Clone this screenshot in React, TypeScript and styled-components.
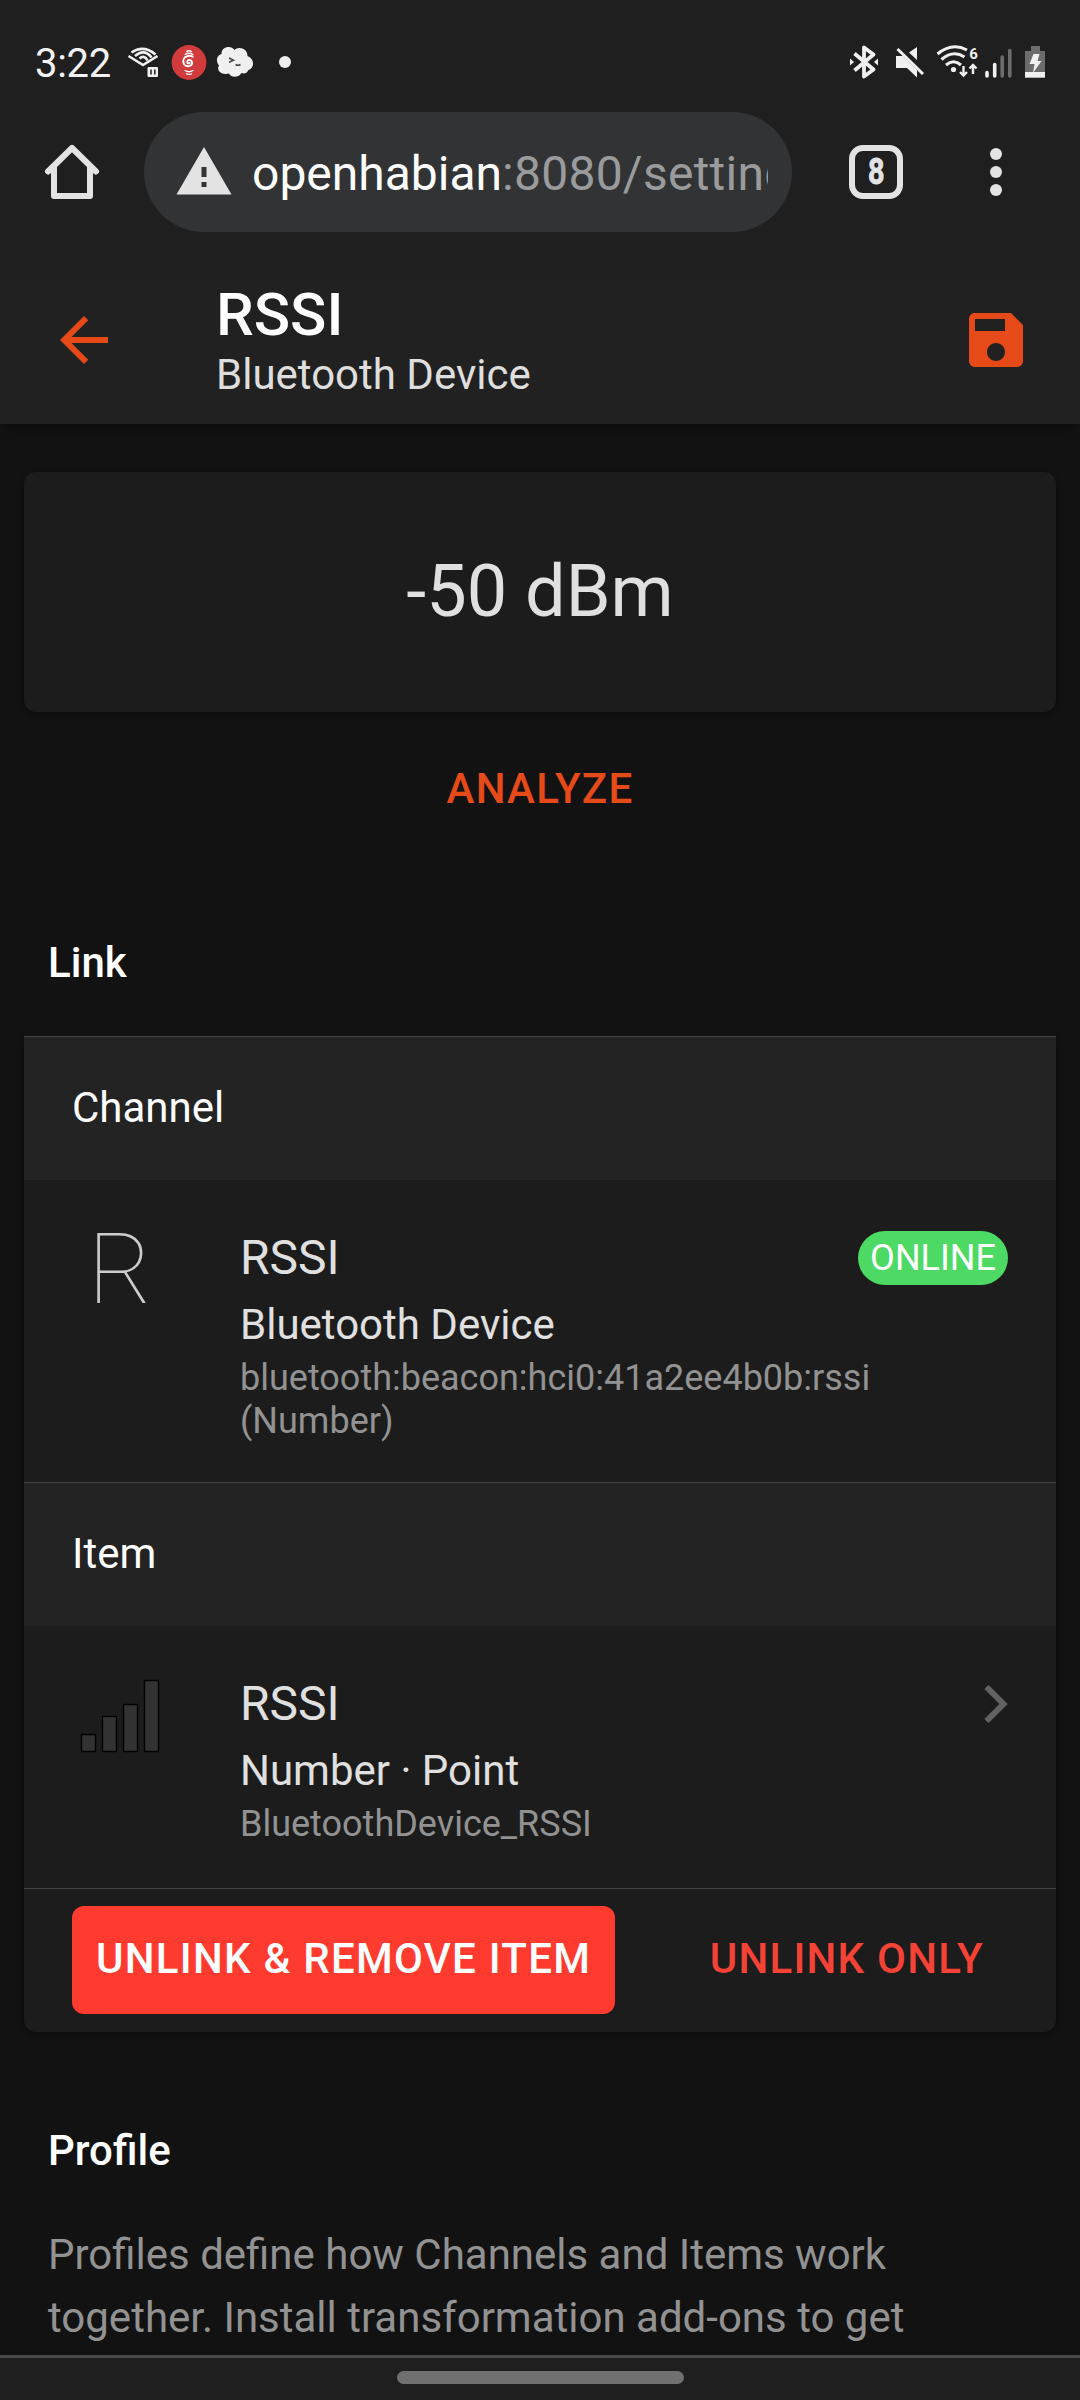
import React from "react";
import styled, { createGlobalStyle } from "styled-components";

const GlobalStyle = createGlobalStyle`
  *, *::before, *::after { box-sizing: border-box; }
  body {
    margin: 0;
    background: #121212;
    font-family: Roboto, "Noto Sans", sans-serif;
    color: #e0e0e0;
  }
  button { font: inherit; border: 0; padding: 0; background: none; color: inherit; }
  svg { display: block; }
`;

const Screen = styled.div`
  width: 1080px;
  height: 2400px;
  display: flex;
  flex-direction: column;
  overflow: hidden;
  background: #121212;
`;

const StatusBar = styled.header`
  flex: none;
  height: 112px;
  padding: 12px 35px 0 35px;
  display: flex;
  justify-content: space-between;
  align-items: center;
  background: #1f1f1f;
`;

const StatusGroup = styled.div`
  display: flex;
  align-items: center;
`;

const Clock = styled.span`
  width: 91px;
  padding-top: 3px;
  font-size: 40px;
  line-height: 48px;
  letter-spacing: -0.3px;
  color: #f2f2f2;
`;

const BrowserBar = styled.div`
  flex: none;
  height: 144px;
  padding: 0 66px 24px 36px;
  display: flex;
  align-items: center;
  background: #1f1f1f;
`;

const AddressPill = styled.div`
  width: 648px;
  height: 120px;
  margin-left: 36px;
  padding: 0 24px 0 30px;
  display: flex;
  align-items: center;
  gap: 18px;
  border-radius: 60px;
  background: #323335;
`;

const Url = styled.span`
  flex: 1;
  padding-top: 3px;
  overflow: hidden;
  white-space: nowrap;
  font-size: 48px;
  line-height: 60px;
  letter-spacing: 0.25px;
  color: #9a9b9c;
`;

const Host = styled.span`
  letter-spacing: 0;
  color: #fff;
`;

const TabCount = styled.button`
  width: 54px;
  height: 54px;
  margin-left: 57px;
  display: flex;
  align-items: center;
  justify-content: center;
  border: 6px solid #e3e3e3;
  border-radius: 14px;
  color: #e3e3e3;
  font-size: 36px;
  font-weight: 700;
  line-height: 42px;
`;

const Condensed = styled.span`
  transform: scaleX(0.8);
  -webkit-text-stroke: 0.8px #e3e3e3;
`;

const MenuDots = styled.button`
  margin-left: auto;
  width: 36px;
  display: flex;
  flex-direction: column;
  align-items: center;
  gap: 6px;
`;

const Dot = styled.i`
  width: 12px;
  height: 12px;
  border-radius: 50%;
  background: #e3e3e3;
`;

const Navbar = styled.nav`
  flex: none;
  height: 168px;
  padding: 0 48px;
  display: flex;
  align-items: center;
  background: linear-gradient(#1f1f1f, #212121 28px);
  box-shadow: 0 10px 10px -4px rgba(0, 0, 0, 0.3);
`;

const NavTitle = styled.div`
  flex: 1;
  margin-left: 96px;
  padding-top: 2px;
`;

const Title = styled.h1`
  margin: 0;
  font-size: 60px;
  font-weight: 500;
  line-height: 66px;
  color: #fff;
`;

const Subtitle = styled.div`
  padding-top: 2px;
  font-size: 42px;
  line-height: 50px;
  color: #dedede;
`;

const Page = styled.main`
  flex: 1;
  min-height: 0;
  overflow: hidden;
  padding: 48px 24px 0;
  display: flex;
  flex-direction: column;
`;

const cardShadow = "0 3px 6px rgba(0, 0, 0, 0.4)";

const ValueCard = styled.section`
  flex: none;
  height: 240px;
  display: flex;
  align-items: center;
  justify-content: center;
  border-radius: 12px;
  background: #1c1c1c;
  box-shadow: ${cardShadow};
  font-size: 72px;
  line-height: 84px;
`;

const AnalyzeButton = styled.button`
  flex: none;
  height: 108px;
  margin-top: 23px;
  font-size: 42px;
  font-weight: 500;
  line-height: 108px;
  letter-spacing: 1.26px;
  color: #e64a19;
`;

const BlockTitle = styled.h2<{ $top: number }>`
  flex: none;
  margin: ${(p) => p.$top}px 24px 0;
  font-size: 42px;
  font-weight: 500;
  line-height: 48px;
  color: #fff;
`;

const LinkCard = styled.section`
  flex: none;
  margin-top: 49px;
  border-radius: 0 0 12px 12px;
  background: #1c1c1c;
  box-shadow: ${cardShadow};
`;

const CardHeader = styled.div`
  height: 144px;
  padding: 0 48px;
  border-top: 1px solid #414141;
  background: #232323;
  font-size: 42px;
  line-height: 142px;
  color: #fff;
`;

const ListItem = styled.div<{ $height: number }>`
  height: ${(p) => p.$height}px;
  padding: 42px 48px 0;
  display: flex;
  align-items: flex-start;
`;

const Media = styled.div`
  flex: none;
  width: 96px;
  display: flex;
  justify-content: center;
`;

const Letter = styled.span`
  font-size: 98px;
  font-weight: 100;
  line-height: 96px;
  color: #cccccc;
`;

const ItemBody = styled.div`
  flex: 1;
  min-width: 0;
  margin-left: 72px;
`;

const ItemTitleRow = styled.div`
  height: 72px;
  display: flex;
  justify-content: space-between;
  align-items: center;
  font-size: 48px;
  line-height: 72px;
`;

const ItemSubtitle = styled.div`
  font-size: 42px;
  line-height: 62px;
`;

const ItemText = styled.div`
  margin-top: 1px;
  font-size: 36px;
  line-height: 43px;
  color: #929292;
`;

const Badge = styled.span`
  width: 150px;
  height: 54px;
  border-radius: 27px;
  background: #4cd964;
  color: #fff;
  font-size: 36px;
  line-height: 54px;
  text-align: center;
`;

const Actions = styled.div`
  height: 144px;
  padding: 17px 48px 0;
  display: flex;
  align-items: flex-start;
  justify-content: space-between;
  border-top: 1px solid #414141;
`;

const ActionButton = styled.button<{ $filled?: boolean }>`
  height: 108px;
  padding: 0 24px 2px;
  border-radius: 12px;
  background: ${(p) => (p.$filled ? "#ff3b30" : "transparent")};
  color: ${(p) => (p.$filled ? "#fff" : "#f44336")};
  font-size: 42px;
  font-weight: 500;
  line-height: 106px;
  letter-spacing: 1.26px;
  white-space: nowrap;
`;

const Paragraph = styled.p`
  flex: none;
  width: 900px;
  margin: 48px 24px 0;
  font-size: 42px;
  line-height: 63px;
  color: #929292;
`;

const GestureBar = styled.footer`
  flex: none;
  height: 45px;
  padding-top: 13px;
  border-top: 3px solid #4a4a4a;
  background: #1f1f1f;
`;

const Handle = styled.div`
  width: 287px;
  height: 13px;
  margin: 0 auto;
  border-radius: 7px;
  background: #707070;
`;

const WifiGeneration = styled.text`
  font: 700 15px Roboto, sans-serif;
  fill: #f0f0f0;
`;

const StatusLeftIcons = () => (
  <svg width="170" height="48" viewBox="126 38 170 48">
    <g fill="none" stroke="#f0f0f0" strokeWidth="2.6">
      <path d="M128.500 56 L143 65 L157.500 56" />
      <path d="M131.500 52.500 Q143.500 44.500 155.500 54.500" />
      <path d="M135 56 Q144.500 48 151.500 57.500" />
      <path d="M139.500 58.500 Q144.500 54.500 147.500 60.500" />
    </g>
    <rect x="147.500" y="67" width="10.500" height="10" rx="1" fill="#f0f0f0" />
    <path d="M151 69.500v5M154.800 69.500v5" stroke="#1f1f1f" strokeWidth="1.500" />
    <circle cx="189" cy="62.500" r="17.400" fill="#d23b3c" />
    <g fill="none" stroke="#fff" strokeLinecap="round">
      <path
        d="M189.500 63q-2.500 1-2.300-1.500q1-2.500 4-1q2 3-.5 5q-4 2-6.500-1q-2-4 .5-7q4-3 8-.8"
        strokeWidth="1.900"
      />
      <path
        d="M185 54.500q4-2.500 8 0M186.500 51.500q2.500-1.500 5 0M185 70.500q4 2.500 8 0M186.500 73.700q2.500 1.500 5 0"
        strokeWidth="1.300"
      />
    </g>
    <path
      d="M221.500 54 C221 47 231 44.500 234.500 50 C239 46 247.500 48.500 247.500 56 C254.500 58.500 255 68 248.500 70 C247 73.500 244 74 241.500 73 C238 78.500 231 77.500 229 73.500 C221 75.500 216 70 219 65.500 C215.500 61 216.500 55.500 221.500 54Z"
      fill="#f0f0f0"
    />
    <path
      d="M229 58l4.500 2.300-4.500 2M235.500 64.500q2.500 1.500 5 0"
      fill="none"
      stroke="#444"
      strokeWidth="1.500"
    />
    <circle cx="285" cy="62" r="6" fill="#f0f0f0" />
  </svg>
);

const StatusRightIcons = () => (
  <svg width="197" height="48" viewBox="848 38 197 48">
    <path
      d="M854.500 53.500 L873.500 69.500 L864 76.500 V47.500 L873.500 54.500 L854.500 70.500"
      fill="none"
      stroke="#f0f0f0"
      strokeWidth="3.800"
      strokeLinejoin="round"
    />
    <path d="M850 58.500v7l4-3.500zM878 58.500v7l-4-3.500z" fill="#f0f0f0" />
    <path d="M896 56h7l14 14v7.500l-10-9.500h-11zM917 47v13l-8-7.500z" fill="#f0f0f0" />
    <path d="M897.500 49 L923 74" stroke="#f0f0f0" strokeWidth="3" />
    <g fill="none" stroke="#f0f0f0" strokeWidth="3">
      <path d="M937.500 54 Q952 42 967 50" />
      <path d="M941.500 59.500 Q953 49.500 964.500 57" />
      <path d="M946 65 Q953.500 58.500 961 65" />
    </g>
    <circle cx="953.500" cy="69.500" r="2.600" fill="#f0f0f0" />
    <WifiGeneration x="969.300" y="59">6</WifiGeneration>
    <path
      d="M963.500 66v9M960 72l3.500 3.500 3.500-3.500M973 74v-9M969.500 68.500l3.500-3.500 3.500 3.500"
      fill="none"
      stroke="#f0f0f0"
      strokeWidth="2.400"
    />
    <g strokeWidth="3.600" strokeLinecap="round">
      <path d="M987 72.500v3.500M994.700 64.500v11.500" stroke="#f0f0f0" />
      <path d="M1002.200 57v19M1009.800 50.500v25.500" stroke="#6c6c6c" />
    </g>
    <path d="M1031 46h9v5h5v27h-20v-27h6z" fill="#6c6c6c" />
    <path d="M1025 72h20v5.500h-20z" fill="#f0f0f0" />
    <path d="M1033.500 54h6l-2 7h4l-8.500 12 1.500-9h-5z" fill="#f0f0f0" />
  </svg>
);

const HomeIcon = () => (
  <svg width="72" height="72" viewBox="0 0 72 72" fill="none" stroke="#e3e3e3" strokeWidth="6">
    <path d="M12 35.500 L36 12 L60 35.500" strokeLinecap="round" strokeLinejoin="round" />
    <path d="M18 31 V60 H54 V31" strokeLinejoin="round" />
  </svg>
);

const MaterialIcon = ({ size, color, d }: { size: number; color: string; d: string }) => (
  <svg width={size} height={size} viewBox="0 0 24 24" fill={color}>
    <path d={d} />
  </svg>
);

const WARNING = "M1 21h22L12 2 1 21zm12-3h-2v-2h2v2zm0-4h-2v-4h2v4z";
const ARROW_BACK = "M20 11H7.830l5.590-5.590L12 4l-8 8 8 8 1.410-1.410L7.830 13H20v-2z";
const SAVE =
  "M17 3H5c-1.110 0-2 .9-2 2v14c0 1.100.89 2 2 2h14c1.100 0 2-.9 2-2V7l-4-4zm-5 16c-1.660 0-3-1.340-3-3s1.340-3 3-3 3 1.340 3 3-1.340 3-3 3zm3-10H5V5h10v4z";

const bars = [
  { x: 9.5, h: 17 },
  { x: 30.5, h: 35 },
  { x: 51.5, h: 47 },
  { x: 72.5, h: 71 },
];

const SignalIcon = () => (
  <svg width="96" height="96" viewBox="0 0 96 96" fill="#323232" stroke="#000" strokeWidth="1.400">
    {bars.map((b) => (
      <rect key={b.x} x={b.x} y={83.5 - b.h} width="14" height={b.h} />
    ))}
  </svg>
);

const Chevron = () => (
  <svg width="28" height="42" viewBox="0 0 28 42" fill="none" stroke="#626262" strokeWidth="6">
    <path d="M6.500 4 L23.500 21 L6.500 38" />
  </svg>
);

export default function App() {
  return (
    <>
      <GlobalStyle />
      <Screen>
        <StatusBar>
          <StatusGroup>
            <Clock>3:22</Clock>
            <StatusLeftIcons />
          </StatusGroup>
          <StatusRightIcons />
        </StatusBar>
        <BrowserBar>
          <HomeIcon />
          <AddressPill>
            <MaterialIcon size={60} color="#e3e3e3" d={WARNING} />
            <Url>
              <Host>openhabian</Host>:8080/setting
            </Url>
          </AddressPill>
          <TabCount>
            <Condensed>8</Condensed>
          </TabCount>
          <MenuDots>
            <Dot />
            <Dot />
            <Dot />
          </MenuDots>
        </BrowserBar>
        <Navbar>
          <MaterialIcon size={72} color="#e64a19" d={ARROW_BACK} />
          <NavTitle>
            <Title>RSSI</Title>
            <Subtitle>Bluetooth Device</Subtitle>
          </NavTitle>
          <MaterialIcon size={72} color="#e64a19" d={SAVE} />
        </Navbar>
        <Page>
          <ValueCard>-50 dBm</ValueCard>
          <AnalyzeButton>ANALYZE</AnalyzeButton>
          <BlockTitle $top={96}>Link</BlockTitle>
          <LinkCard>
            <CardHeader>Channel</CardHeader>
            <ListItem $height={302}>
              <Media>
                <Letter>R</Letter>
              </Media>
              <ItemBody>
                <ItemTitleRow>
                  RSSI
                  <Badge>ONLINE</Badge>
                </ItemTitleRow>
                <ItemSubtitle>Bluetooth Device</ItemSubtitle>
                <ItemText>
                  bluetooth:beacon:hci0:41a2ee4b0b:rssi
                  <br />
                  (Number)
                </ItemText>
              </ItemBody>
            </ListItem>
            <CardHeader>Item</CardHeader>
            <ListItem $height={262}>
              <Media>
                <SignalIcon />
              </Media>
              <ItemBody>
                <ItemTitleRow>
                  RSSI
                  <Chevron />
                </ItemTitleRow>
                <ItemSubtitle>Number · Point</ItemSubtitle>
                <ItemText>BluetoothDevice_RSSI</ItemText>
              </ItemBody>
            </ListItem>
            <Actions>
              <ActionButton $filled>UNLINK &amp; REMOVE ITEM</ActionButton>
              <ActionButton>UNLINK ONLY</ActionButton>
            </Actions>
          </LinkCard>
          <BlockTitle $top={95}>Profile</BlockTitle>
          <Paragraph>
            Profiles define how Channels and Items work together. Install transformation add-ons to get
          </Paragraph>
        </Page>
        <GestureBar>
          <Handle />
        </GestureBar>
      </Screen>
    </>
  );
}
